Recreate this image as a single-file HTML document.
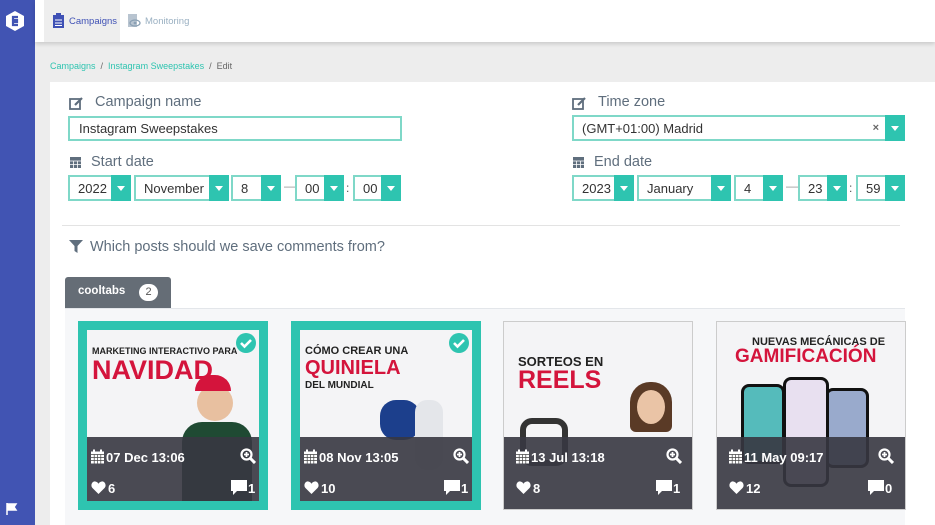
<!DOCTYPE html>
<html><head><meta charset="utf-8"><style>
*{box-sizing:border-box;margin:0;padding:0}
body{width:935px;height:525px;overflow:hidden;background:#ededed;font-family:"Liberation Sans",sans-serif;position:relative}
.a{position:absolute}
.sb{left:0;top:0;width:35px;height:525px;background:#4154b3}
.top{left:35px;top:0;width:900px;height:42px;background:#fff;box-shadow:0 2px 4px rgba(0,0,0,.15)}
.lbl{font-size:14.5px;color:#5f6e7d}
.inp{border:2px solid #7fd8c8;background:#fff;font-size:13px;color:#333;padding-left:9px;display:flex;align-items:center}
.sel{border:2px solid #7fd8c8;background:#fff;font-size:13px;color:#333;display:flex;align-items:center;height:26px}
.sel span{flex:1;padding-left:8px}
.sel i{width:20px;height:26px;margin:-2px -2px -2px 0;background:#2ec4b0;display:flex;align-items:center;justify-content:center}
.sel i:after{content:"";border-left:4px solid transparent;border-right:4px solid transparent;border-top:5px solid #fff}
.card{width:190px;height:189px}
.img{background:#f4f4f6;overflow:hidden}
.ov{background:rgba(55,55,65,.9);color:#fff;font-weight:bold;font-size:13px}
</style></head><body>
<div class="a sb"></div>
<svg class="a" style="left:5px;top:10px" width="20" height="22" viewBox="0 0 20 22"><path d="M10 1 L19 6 L19 16 L10 21 L1 16 L1 6Z" fill="#fff"/><path d="M13 7 H8 V10 H12 V12 H8 V15 H13" stroke="#4154b3" stroke-width="2.2" fill="none"/></svg>
<svg class="a" style="left:5px;top:502px" width="14" height="14"><path d="M2 1V13M2 2H11L9 5L11 8H2" fill="#fff" stroke="#fff" stroke-width="1.5"/></svg>
<div class="a top"></div>
<div class="a" style="left:44px;top:0;width:76px;height:42px;background:#eeeeee"></div>
<svg class="a" style="left:52px;top:13px" width="13" height="16"><rect x="1" y="2" width="11" height="13" fill="#3f51b5"/><rect x="4" y="0" width="5" height="3" fill="#3f51b5"/><path d="M3 7H10M3 10H10M3 12.5H10" stroke="#fff"/></svg>
<div class="a" style="left:69px;top:16px;font-size:9.5px;color:#3f51b5">Campaigns</div>
<svg class="a" style="left:127px;top:13px" width="14" height="16"><rect x="1" y="1" width="9" height="13" fill="#b8c4d0"/><ellipse cx="8" cy="10" rx="5" ry="3" fill="none" stroke="#8aa0b4" stroke-width="1.3"/><circle cx="8" cy="10" r="1.4" fill="#8aa0b4"/></svg>
<div class="a" style="left:145px;top:16px;font-size:9.5px;color:#9ab0c2">Monitoring</div>
<div class="a" style="left:50px;top:61px;font-size:9px;color:#666"><span style="color:#2ec4b0">Campaigns</span> &nbsp;/&nbsp; <span style="color:#2ec4b0">Instagram Sweepstakes</span> &nbsp;/&nbsp; Edit</div>
<div class="a" style="left:50px;top:82px;width:885px;height:443px;background:#fff"></div>

<svg class="a" style="left:69px;top:96px" width="15" height="14"><rect x="1" y="3" width="10" height="10" fill="none" stroke="#5f6e7d" stroke-width="1.8"/><path d="M6 9L13 2" stroke="#5f6e7d" stroke-width="2.2"/></svg>
<div class="a lbl" style="left:95px;top:94px">Campaign name</div>
<div class="a inp" style="left:68px;top:116px;width:334px;height:25px">Instagram Sweepstakes</div>
<svg class="a" style="left:69px;top:155px" width="13" height="14"><rect x="1" y="2" width="11" height="11" fill="#5f6e7d"/><path d="M1 6H12M4.5 6V13M8.5 6V13M1 9.5H12" stroke="#fff" stroke-width=".8"/></svg>
<div class="a lbl" style="left:91px;top:154px">Start date</div>
<div class="a sel" style="left:68px;top:175px;width:63px"><span>2022</span><i></i></div>
<div class="a sel" style="left:134px;top:175px;width:95px"><span>November</span><i></i></div>
<div class="a sel" style="left:231px;top:175px;width:50px"><span>8</span><i></i></div>
<div class="a" style="left:284px;top:179px;color:#999;font-size:12px">—</div>
<div class="a sel" style="left:295px;top:175px;width:49px"><span>00</span><i></i></div>
<div class="a" style="left:346px;top:181px;color:#555;font-size:12px">:</div>
<div class="a sel" style="left:353px;top:175px;width:48px"><span>00</span><i></i></div>

<svg class="a" style="left:572px;top:96px" width="15" height="14"><rect x="1" y="3" width="10" height="10" fill="none" stroke="#5f6e7d" stroke-width="1.8"/><path d="M6 9L13 2" stroke="#5f6e7d" stroke-width="2.2"/></svg>
<div class="a lbl" style="left:598px;top:94px">Time zone</div>
<div class="a sel" style="left:572px;top:115px;width:333px;height:26px"><span>(GMT+01:00) Madrid</span><b style="font-size:11px;color:#666;margin-right:6px">×</b><i></i></div>
<svg class="a" style="left:572px;top:155px" width="13" height="14"><rect x="1" y="2" width="11" height="11" fill="#5f6e7d"/><path d="M1 6H12M4.5 6V13M8.5 6V13M1 9.5H12" stroke="#fff" stroke-width=".8"/></svg>
<div class="a lbl" style="left:594px;top:154px">End date</div>
<div class="a sel" style="left:572px;top:175px;width:62px"><span>2023</span><i></i></div>
<div class="a sel" style="left:637px;top:175px;width:94px"><span>January</span><i></i></div>
<div class="a sel" style="left:734px;top:175px;width:49px"><span>4</span><i></i></div>
<div class="a" style="left:786px;top:179px;color:#999;font-size:12px">—</div>
<div class="a sel" style="left:798px;top:175px;width:49px"><span>23</span><i></i></div>
<div class="a" style="left:849px;top:181px;color:#555;font-size:12px">:</div>
<div class="a sel" style="left:856px;top:175px;width:49px"><span>59</span><i></i></div>

<div class="a" style="left:62px;top:225px;width:838px;height:1px;background:#e3e3e3"></div>
<svg class="a" style="left:69px;top:240px" width="14" height="13"><path d="M0 0H14L8.5 6V13L5.5 11V6Z" fill="#5f6e7d"/></svg>
<div class="a lbl" style="left:90px;top:239px">Which posts should we save comments from?</div>

<div class="a" style="left:65px;top:277px;width:106px;height:31px;background:#656d76;border-radius:3px 3px 0 0"></div>
<div class="a" style="left:78px;top:285px;color:#fff;font-size:11.5px;font-weight:bold">cooltabs</div>
<div class="a" style="left:139px;top:284px;width:19px;height:17px;border-radius:9px;background:#fff;color:#555;font-size:11px;text-align:center;line-height:17px">2</div>
<div class="a" style="left:65px;top:308px;width:840px;height:217px;background:#f6f7f9;border-top:1px solid #e3e6ea"></div>

<div class="a card" style="left:78px;top:321px;background:#2ec4b0"></div>
<div class="a img" style="left:87px;top:330px;width:172px;height:171px">
 <div class="a" style="left:5px;top:16px;font-size:9px;font-weight:bold;color:#222">MARKETING INTERACTIVO PARA</div>
 <div class="a" style="left:5px;top:25px;font-size:27px;font-weight:bold;color:#d4143c">NAVIDAD</div>
 <div class="a" style="left:110px;top:55px;width:36px;height:36px;border-radius:50%;background:#e8c0a0"></div>
 <div class="a" style="left:108px;top:45px;width:36px;height:16px;border-radius:16px 16px 0 0;background:#d4143c"></div>
 <div class="a" style="left:95px;top:92px;width:70px;height:80px;border-radius:20px 20px 0 0;background:#1f4a33"></div>
</div>
<div class="a card" style="left:291px;top:321px;background:#2ec4b0"></div>
<div class="a img" style="left:300px;top:330px;width:172px;height:171px">
 <div class="a" style="left:5px;top:15px;font-size:11px;font-weight:bold;color:#222">CÓMO CREAR UNA</div>
 <div class="a" style="left:5px;top:27px;font-size:20px;font-weight:bold;color:#d4143c">QUINIELA</div>
 <div class="a" style="left:5px;top:50px;font-size:10px;font-weight:bold;color:#222">DEL MUNDIAL</div>
 <div class="a" style="left:80px;top:70px;width:40px;height:40px;border-radius:40%;background:#1c3f8c"></div>
 <div class="a" style="left:115px;top:70px;width:28px;height:70px;border-radius:12px;background:#e4e6ea"></div>
</div>
<div class="a card img" style="left:503px;top:321px;border:1px solid #ccc">
 <div class="a" style="left:14px;top:32px;font-size:13px;font-weight:bold;color:#222">SORTEOS EN</div>
 <div class="a" style="left:14px;top:44px;font-size:25px;font-weight:bold;color:#d4143c">REELS</div>
 <div class="a" style="left:126px;top:60px;width:42px;height:50px;border-radius:20px 20px 6px 6px;background:#5a3a26"></div>
 <div class="a" style="left:133px;top:68px;width:28px;height:34px;border-radius:50%;background:#eac4a6"></div>
 <div class="a" style="left:16px;top:96px;width:48px;height:48px;border:6px solid #333;border-radius:12px"></div>
</div>
<div class="a card img" style="left:716px;top:321px;border:1px solid #ccc">
 <div class="a" style="left:35px;top:14px;font-size:11px;font-weight:bold;color:#222">NUEVAS MECÁNICAS DE</div>
 <div class="a" style="left:18px;top:24px;font-size:19px;font-weight:bold;color:#d4143c">GAMIFICACIÓN</div>
 <div class="a" style="left:24px;top:62px;width:44px;height:80px;border:3px solid #111;border-radius:8px;background:#5bb"></div>
 <div class="a" style="left:108px;top:66px;width:44px;height:80px;border:3px solid #111;border-radius:8px;background:#9ac"></div>
 <div class="a" style="left:66px;top:55px;width:46px;height:110px;border:3px solid #111;border-radius:8px;background:#e8e0f0"></div>
</div>

<div class="a ov" style="left:87px;top:437px;width:172px;height:64px"></div>
<div class="a ov" style="left:300px;top:437px;width:172px;height:64px"></div>
<div class="a ov" style="left:504px;top:437px;width:188px;height:72px"></div>
<div class="a ov" style="left:717px;top:437px;width:188px;height:72px"></div>

<svg width="0" height="0" style="position:absolute"><defs>
<symbol id="cal" viewBox="0 0 13 14"><rect x="0" y="2" width="13" height="12" fill="#fff"/><rect x="2" y="0" width="2" height="3" fill="#fff"/><rect x="9" y="0" width="2" height="3" fill="#fff"/><path d="M0 5H13M3.2 5V14M6.5 5V14M9.8 5V14M0 8H13M0 11H13" stroke="#444" stroke-width=".7"/></symbol>
<symbol id="zm" viewBox="0 0 16 16"><circle cx="6.5" cy="6.5" r="5" fill="none" stroke="#fff" stroke-width="2.2"/><path d="M10 10L15 15" stroke="#fff" stroke-width="3"/><path d="M4 6.5H9M6.5 4V9" stroke="#fff" stroke-width="1.8"/></symbol>
<symbol id="ht" viewBox="0 0 16 14"><path d="M8 14L1.5 7.5C-1 5 1 0 4.5 0.5 6.5 0.8 7.5 2 8 3 8.5 2 9.5 0.8 11.5 0.5 15 0 17 5 14.5 7.5Z" fill="#fff"/></symbol>
<symbol id="cm" viewBox="0 0 16 15"><path d="M0 0H16V11H6L2 15V11H0Z" fill="#fff"/></symbol>
<symbol id="ck" viewBox="0 0 20 20"><circle cx="10" cy="10" r="10" fill="#2ec4b0"/><path d="M5 10L8.5 13.5L15 7" stroke="#fff" stroke-width="2.6" fill="none"/></symbol>
</defs></svg>

<svg class="a" style="left:236px;top:333px" width="20" height="20"><use href="#ck"/></svg>
<svg class="a" style="left:449px;top:333px" width="20" height="20"><use href="#ck"/></svg>

<svg class="a" style="left:91px;top:449px" width="13" height="15"><use href="#cal"/></svg>
<div class="a ov" style="left:106px;top:450px;background:none">07 Dec 13:06</div>
<svg class="a" style="left:240px;top:448px" width="16" height="16"><use href="#zm"/></svg>
<svg class="a" style="left:91px;top:481px" width="15" height="13"><use href="#ht"/></svg>
<div class="a ov" style="left:108px;top:481px;background:none">6</div>
<svg class="a" style="left:231px;top:480px" width="16" height="15"><use href="#cm"/></svg>
<div class="a ov" style="left:248px;top:481px;background:none">1</div>

<svg class="a" style="left:304px;top:449px" width="13" height="15"><use href="#cal"/></svg>
<div class="a ov" style="left:319px;top:450px;background:none">08 Nov 13:05</div>
<svg class="a" style="left:453px;top:448px" width="16" height="16"><use href="#zm"/></svg>
<svg class="a" style="left:304px;top:481px" width="15" height="13"><use href="#ht"/></svg>
<div class="a ov" style="left:321px;top:481px;background:none">10</div>
<svg class="a" style="left:444px;top:480px" width="16" height="15"><use href="#cm"/></svg>
<div class="a ov" style="left:461px;top:481px;background:none">1</div>

<svg class="a" style="left:516px;top:449px" width="13" height="15"><use href="#cal"/></svg>
<div class="a ov" style="left:531px;top:450px;background:none">13 Jul 13:18</div>
<svg class="a" style="left:666px;top:448px" width="16" height="16"><use href="#zm"/></svg>
<svg class="a" style="left:516px;top:481px" width="15" height="13"><use href="#ht"/></svg>
<div class="a ov" style="left:533px;top:481px;background:none">8</div>
<svg class="a" style="left:656px;top:480px" width="16" height="15"><use href="#cm"/></svg>
<div class="a ov" style="left:673px;top:481px;background:none">1</div>

<svg class="a" style="left:729px;top:449px" width="13" height="15"><use href="#cal"/></svg>
<div class="a ov" style="left:744px;top:450px;background:none">11 May 09:17</div>
<svg class="a" style="left:878px;top:448px" width="16" height="16"><use href="#zm"/></svg>
<svg class="a" style="left:729px;top:481px" width="15" height="13"><use href="#ht"/></svg>
<div class="a ov" style="left:746px;top:481px;background:none">12</div>
<svg class="a" style="left:868px;top:480px" width="16" height="15"><use href="#cm"/></svg>
<div class="a ov" style="left:885px;top:481px;background:none">0</div>
</body></html>
